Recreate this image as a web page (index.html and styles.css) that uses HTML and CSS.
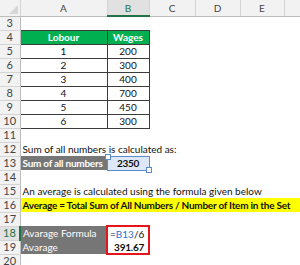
FILE: index.html
```html
<!DOCTYPE html>
<html lang="en">
<head>
<meta charset="UTF-8">
<title>Average</title>
<link rel="stylesheet" href="styles.css">
</head>
<body>
<table class="sheet">
  <colgroup>
    <col class="c-num"><col class="c-a"><col class="c-b"><col class="c-c"><col class="c-d"><col class="c-e"><col class="c-f">
  </colgroup>
  <thead>
    <tr>
      <th class="corner"><span class="tri"></span></th>
      <th>A</th><th class="active">B</th><th>C</th><th>D</th><th>E</th><th></th>
    </tr>
  </thead>
  <tbody>
    <tr><th>3</th><td></td><td></td><td></td><td></td><td></td><td></td></tr>
    <tr><th>4</th><td class="box head">Lobour</td><td class="box head">Wages</td><td></td><td></td><td></td><td></td></tr>
    <tr><th>5</th><td class="box num">1</td><td class="box num">200</td><td></td><td></td><td></td><td></td></tr>
    <tr><th>6</th><td class="box num">2</td><td class="box num">300</td><td></td><td></td><td></td><td></td></tr>
    <tr><th>7</th><td class="box num">3</td><td class="box num">400</td><td></td><td></td><td></td><td></td></tr>
    <tr><th>8</th><td class="box num">4</td><td class="box num">700</td><td></td><td></td><td></td><td></td></tr>
    <tr><th>9</th><td class="box num">5</td><td class="box num">450</td><td></td><td></td><td></td><td></td></tr>
    <tr><th>10</th><td class="box num">6</td><td class="box num">300</td><td></td><td></td><td></td><td></td></tr>
    <tr><th>11</th><td></td><td></td><td></td><td></td><td></td><td></td></tr>
    <tr><th>12</th><td colspan="6" class="text">Sum of all numbers is calculated as:</td></tr>
    <tr><th>13</th><td class="label bold">Sum of all numbers</td><td class="picked bold">2350<span class="dot tl"></span><span class="dot br"></span></td><td></td><td></td><td></td><td></td></tr>
    <tr><th>14</th><td></td><td></td><td></td><td></td><td></td><td></td></tr>
    <tr><th>15</th><td colspan="6" class="text">An average is calculated using the formula given below</td></tr>
    <tr><th>16</th><td colspan="6" class="text note">Average = Total Sum of All Numbers / Number of Item in the Set</td></tr>
    <tr><th>17</th><td></td><td></td><td></td><td></td><td></td><td></td></tr>
    <tr><th class="active-row">18</th><td class="label">Avarage Formula</td><td class="red-top formula">=<span class="ref">B13</span>/6</td><td></td><td></td><td></td><td></td></tr>
    <tr><th>19</th><td class="label">Avarage</td><td class="red-bottom bold result">391.67</td><td></td><td></td><td></td><td></td></tr>
    <tr><th>20</th><td></td><td></td><td></td><td></td><td></td><td></td></tr>
  </tbody>
</table>
</body>
</html>
```

FILE: styles.css
```css
body {
  margin: 0;
  overflow: hidden;
  font-family: 'Lato', 'Liberation Sans', sans-serif;
  font-size: 10px;
  color: #111;
  background: #fff;
}

.sheet {
  border-collapse: collapse;
  table-layout: fixed;
  width: 300px;
}

.c-num { width: 20px; }
.c-a { width: 87px; }
.c-b { width: 42px; }
.c-c { width: 46px; }
.c-d { width: 45px; }
.c-e { width: 44px; }
.c-f { width: 16px; }

.sheet tr {
  height: 14px;
}

.sheet thead tr {
  height: 16px;
}

.sheet td, .sheet th {
  padding: 0;
  line-height: 12px;
  white-space: nowrap;
  overflow: visible;
}

/* column letters */
.sheet thead th {
  background: #f2f2f2;
  color: #444;
  font-weight: normal;
  border-right: 1px solid #d4d4d4;
  border-bottom: 1px solid #bcbcbc;
  text-align: center;
}

.sheet thead th.active {
  background: #e1e1e1;
  color: #217346;
  border-bottom: 2px solid #217346;
}

.corner {
  position: relative;
}

.tri {
  position: absolute;
  right: 2px;
  bottom: 2px;
  width: 0;
  height: 0;
  border-left: 9px solid transparent;
  border-bottom: 9px solid #d6d6d6;
}

/* row numbers */
.sheet tbody th {
  background: #f2f2f2;
  color: #444;
  font-size: 11px;
  font-weight: normal;
  text-align: center;
  border-right: 1px solid #bcbcbc;
  border-bottom: 1px solid #d4d4d4;
}

.sheet tbody th.active-row {
  background: #e1e1e1;
  color: #217346;
  border-right: 2px solid #217346;
}

/* the wages table */
.box {
  border: 1px solid #3c3c3c;
}

.head {
  background: #00b050;
  color: #fff;
  font-weight: bold;
  text-align: center;
}

.num {
  text-align: center;
}

.text {
  padding-left: 2px !important;
}

.note {
  background: #ffff00;
  font-weight: bold;
  letter-spacing: -0.25px;
}

.label {
  background: #767676;
  color: #fff;
  padding-left: 2px !important;
}

.bold {
  font-weight: bold;
  letter-spacing: -0.25px;
}

.picked {
  position: relative;
  background: #dde7f5;
  border: 1px solid #5a8ad0;
  text-align: center;
}

.dot {
  position: absolute;
  width: 4px;
  height: 4px;
  background: #fff;
  border: 1px solid #5a8ad0;
}

.dot.tl { left: -3px; top: -3px; }
.dot.br { right: -3px; bottom: -3px; }

.red-top {
  border: 2px solid #e8141c;
  border-bottom: none;
}

.red-bottom {
  border: 2px solid #e8141c;
  border-top: none;
}

.formula {
  padding-left: 2px !important;
}

.ref {
  color: #2f6fd6;
}

.result {
  text-align: right;
  padding-right: 4px !important;
}
```
